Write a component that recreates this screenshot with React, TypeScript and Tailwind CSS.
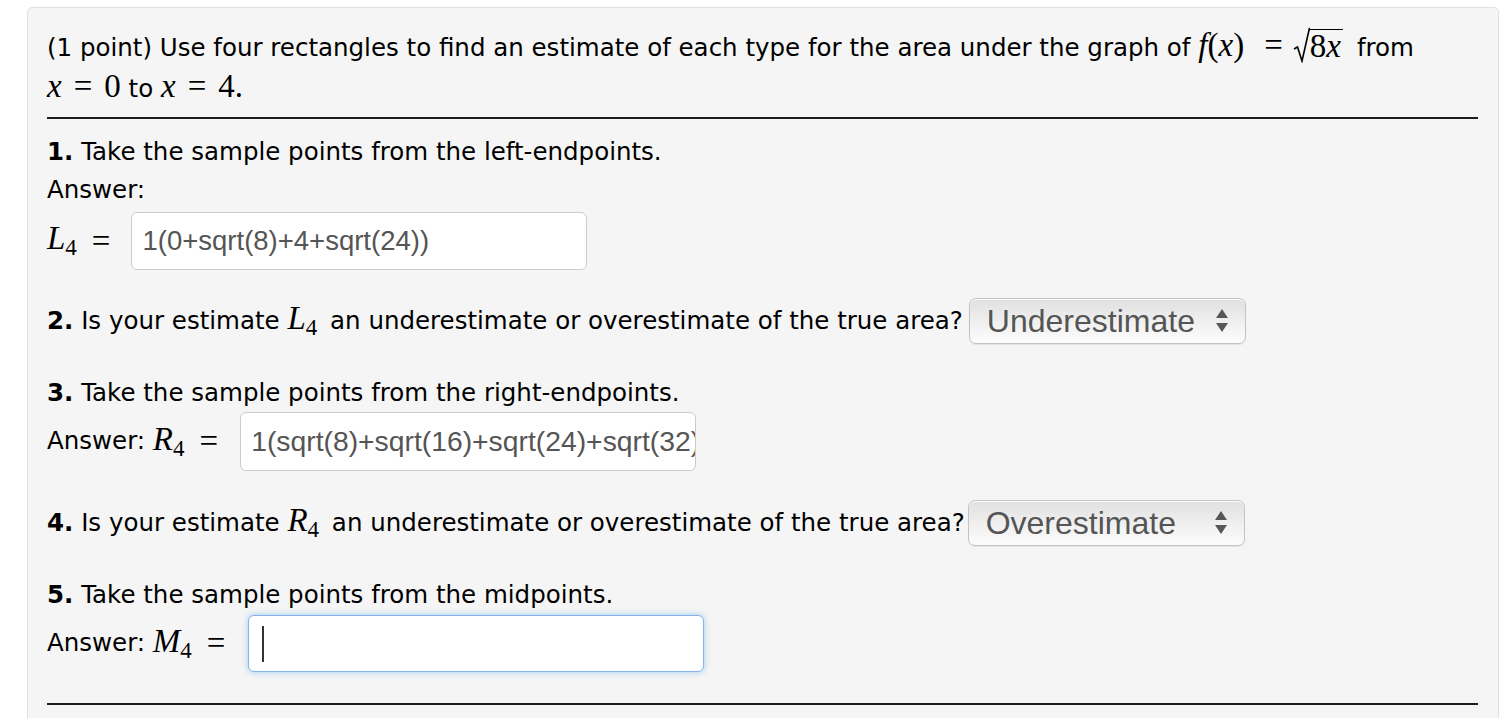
import React from "react";

const serif = "font-['Liberation_Serif',serif]";
const sans = "font-['Liberation_Sans',Arial,sans-serif]";

function Sub({ v, after }: { v: string; after?: boolean }) {
  return (
    <span className={`${serif} text-[33px] leading-none whitespace-nowrap ${after ? "mr-[5px]" : ""}`}>
      <i>{v}</i>
      <span className="text-[23px] align-[-0.28em]">4</span>
    </span>
  );
}

function Eq() {
  return <span className={`${serif} text-[33px] leading-none ml-[15px] mr-[11px]`}>=</span>;
}

function Arrows() {
  return (
    <svg width="14" height="26" viewBox="0 0 14 26">
      <path d="M7 1 L13 10 L1 10 Z" fill="#575757" />
      <path d="M1 15 L13 15 L7 24 Z" fill="#575757" />
    </svg>
  );
}

function Select({ value, ml }: { value: string; ml: string }) {
  return (
    <div
      className={`${ml} w-[277px] h-[46px] rounded-[7px] border border-[#c3c3c3] bg-linear-to-b from-[#e0e0e0] via-[#efefef] to-[#fcfcfc] shadow-[inset_0_1px_0_#ffffff,0_1px_1px_rgba(0,0,0,0.08)] flex items-center justify-between pl-[17px] pr-[16px] ${sans} text-[32px] text-[#555555]`}
    >
      <span className="leading-none">{value}</span>
      <Arrows />
    </div>
  );
}

function Box({ text, focused, big }: { text?: string; focused?: boolean; big?: boolean }) {
  return (
    <div
      className={`w-[456px] h-full rounded-[6px] bg-white flex items-center overflow-hidden whitespace-nowrap pl-[10px] ${sans} ${
        big ? "text-[28.3px]" : "text-[27.5px]"
      } text-[#555555] ${
        focused
          ? "border-[1.5px] border-[#86b2e8] shadow-[0_0_6px_rgba(82,168,236,0.55)]"
          : "border border-[#cccccc]"
      }`}
    >
      {text ? <span className="leading-none">{text}</span> : null}
      {focused ? <span className="ml-[3px] w-[1.5px] h-[36px] bg-[#333333]" /> : null}
    </div>
  );
}

export default function App() {
  return (
    <div className="bg-white min-h-screen pl-[27px] pr-[7px] pt-[7px] font-['DejaVu_Sans',sans-serif] text-[24.5px] text-black">
      <div className="bg-[#f5f5f5] border border-[#e1e1e1] rounded-[5px] pl-[19px] pr-[20px] pt-[19px] pb-[40px]">
        <div className="h-[40px] leading-[40px] whitespace-nowrap">
          (1 point) Use four rectangles to find an estimate of each type for the area under the graph of{" "}
          <span className={`${serif} text-[33px] leading-none`}>
            <i>f</i>(<i>x</i>)<span className="ml-[20px] mr-[10px]">=</span>
            <span className="inline-flex items-end align-[-7px]">
              <svg width="17" height="36" viewBox="0 0 17 36" className="shrink-0">
                <path d="M1 22 L4.5 20 L9 34 L16.5 1" stroke="#000" strokeWidth="1.6" fill="none" />
              </svg>
              <span className="border-t-[1.6px] border-black leading-[33px] pr-[2px]">
                8<i>x</i>
              </span>
            </span>
          </span>
          <span className="ml-[14px]">from</span>
        </div>
        <div className="h-[40px] leading-[44px] whitespace-nowrap">
          <span className={`${serif} text-[33px] leading-none`}>
            <i>x</i>
            <span className="mx-[12px]">=</span>0
          </span>{" "}
          to{" "}
          <span className={`${serif} text-[33px] leading-none`}>
            <i>x</i>
            <span className="mx-[12px]">=</span>4.
          </span>
        </div>

        <div className="mt-[10px] h-[2px] bg-[#1c1c1c]" />

        <div className="mt-[14px] leading-[38px] whitespace-nowrap">
          <b>1.</b> Take the sample points from the left-endpoints.
        </div>
        <div className="leading-[38px]">Answer:</div>
        <div className="mt-[3px] h-[58px] flex items-center">
          <Sub v="L" />
          <Eq />
          <span className="w-[10px]" />
          <Box text="1(0+sqrt(8)+4+sqrt(24))" />
        </div>

        <div className="mt-[28px] h-[46px] flex items-center whitespace-nowrap">
          <span>
            <b>2.</b> Is your estimate <Sub v="L" after /> an underestimate or overestimate of the true area?
          </span>
          <Select value="Underestimate" ml="ml-[6px]" />
        </div>

        <div className="mt-[30px] leading-[38px] whitespace-nowrap">
          <b>3.</b> Take the sample points from the right-endpoints.
        </div>
        <div className="h-[59px] flex items-center whitespace-nowrap">
          <span>Answer:&nbsp;</span>
          <Sub v="R" />
          <Eq />
          <span className="w-[11px]" />
          <Box big text="1(sqrt(8)+sqrt(16)+sqrt(24)+sqrt(32))" />
        </div>

        <div className="mt-[29px] h-[46px] flex items-center whitespace-nowrap">
          <span>
            <b>4.</b> Is your estimate <Sub v="R" after /> an underestimate or overestimate of the true area?
          </span>
          <Select value="Overestimate" ml="ml-[3px]" />
        </div>

        <div className="mt-[30px] leading-[38px] whitespace-nowrap">
          <b>5.</b> Take the sample points from the midpoints.
        </div>
        <div className="mt-[1px] h-[57px] flex items-center whitespace-nowrap">
          <span>Answer:&nbsp;</span>
          <Sub v="M" />
          <Eq />
          <span className="w-[12px]" />
          <Box focused />
        </div>

        <div className="mt-[31px] h-[2px] bg-[#1c1c1c]" />
      </div>
    </div>
  );
}
